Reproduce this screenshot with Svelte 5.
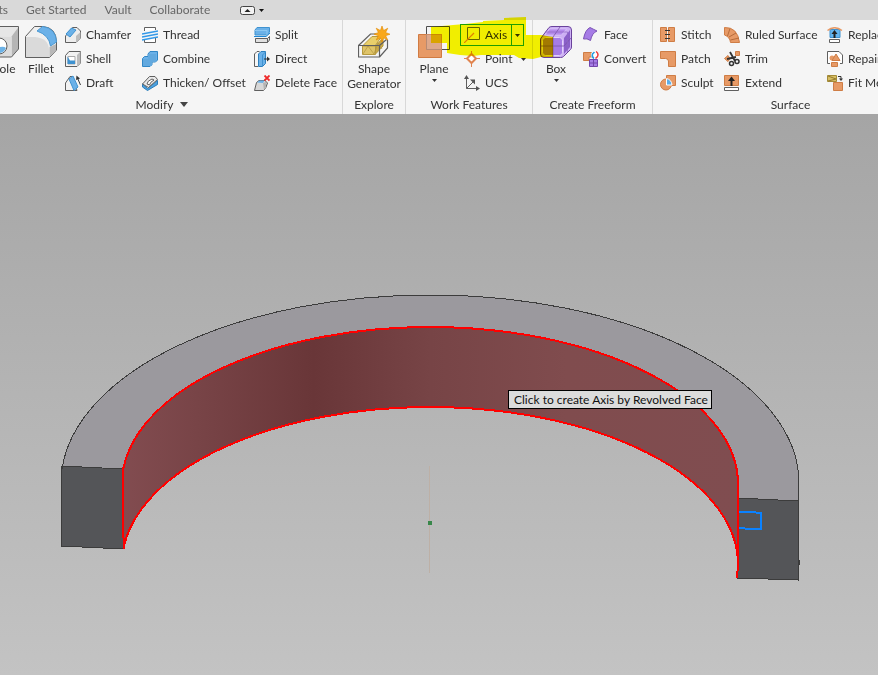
<script>
	const tabs = ['Environments', 'Get Started', 'Vault', 'Collaborate'];

	const panels = [
		{
			id: 'modify', title: 'Modify', more: true,
			big: [{ label: 'Hole', icon: 'hole' }, { label: 'Fillet', icon: 'fillet' }],
			cols: [
				[{ label: 'Chamfer', icon: 'chamfer' }, { label: 'Shell', icon: 'shell' }, { label: 'Draft', icon: 'draft' }],
				[{ label: 'Thread', icon: 'thread' }, { label: 'Combine', icon: 'combine' }, { label: 'Thicken/ Offset', icon: 'thicken' }],
				[{ label: 'Split', icon: 'split' }, { label: 'Direct', icon: 'direct' }, { label: 'Delete Face', icon: 'delete' }]
			]
		},
		{
			id: 'explore', title: 'Explore',
			big: [{ label: 'Shape Generator', icon: 'shape' }],
			cols: []
		},
		{
			id: 'work', title: 'Work Features',
			big: [{ label: 'Plane', icon: 'plane', menu: true }],
			cols: [
				[{ label: 'Axis', icon: 'axis', menu: true, active: true }, { label: 'Point', icon: 'point', menu: true }, { label: 'UCS', icon: 'ucs' }]
			]
		},
		{
			id: 'freeform', title: 'Create Freeform',
			big: [{ label: 'Box', icon: 'box', menu: true }],
			cols: [
				[{ label: 'Face', icon: 'face' }, { label: 'Convert', icon: 'convert' }]
			]
		},
		{
			id: 'surface', title: 'Surface',
			big: [],
			cols: [
				[{ label: 'Stitch', icon: 'stitch' }, { label: 'Patch', icon: 'patch' }, { label: 'Sculpt', icon: 'sculpt' }],
				[{ label: 'Ruled Surface', icon: 'ruled' }, { label: 'Trim', icon: 'trim' }, { label: 'Extend', icon: 'extend' }],
				[{ label: 'Replace Face', icon: 'replace' }, { label: 'Repair Bodies', icon: 'repair' }, { label: 'Fit Mesh Face', icon: 'fitmesh' }]
			]
		}
	];
</script>

{#snippet bigIcon(name)}
	<svg class="icon-lg" viewBox="0 0 32 32" fill="none" stroke="#5f5f5f" aria-hidden="true">
		{#if name === 'hole'}
			<path d="M1 10.5 9 1h22.500l-7 9.500z" fill="#e6e6e6" stroke="none" />
			<path d="M31.500 1v22l-7 8V10.500z" fill="#b5b5b5" stroke="none" />
			<path d="M1 10.500h23.500V31H1z" fill="#dcdcdc" stroke="none" />
			<path d="M1 31h23.500l7-8V.5H9l-8 10z" />
			<circle cx="12" cy="20" r="8" fill="#fff" />
			<path d="M5 22q4-4 8-1 4-1 6 1-2 5-7 5T5 22z" fill="#6cb2e6" stroke="none" />
		{:else if name === 'fillet'}
			<path d="M.5 10.500 9.500.500H18q13 1 13.500 15V24l-7 7.500H.5z" fill="#f0f0f0" />
			<path d="M1 11h9q13 1 14 12v8H1z" fill="#dadada" stroke="none" />
			<path d="M31 18v6l-6.500 7V21z" fill="#b8b8b8" stroke="none" />
			<path d="M12 5 17.500.500Q31 2 31.500 16l-6 4Q24 9 12 5z" fill="#6bb1e8" stroke="#4a98d2" />
		{:else if name === 'shape'}
			<path d="M4.500 20 14 10.500h9.500L17 20z" fill="#e9cf6b" stroke="#b79a3e" />
			<path d="M4.500 20h13v8.500h-13z" fill="#dfc469" stroke="#b79a3e" />
			<path d="M17.500 20 25 12v8l-7.500 8z" fill="#c9a947" stroke="#b79a3e" />
			<path d="m5 28 5-8 6 8 4-11 4 6" stroke="#b0933f" stroke-width=".7" />
			<path d="M.5 19.500h21v11.500H.5zM.5 19.500 12.500 8h6M21.500 19.500l7-6M21.500 31l8-9v-8" stroke-width="1.200" />
			<path d="M24 0l1.600 4.500 4.200-2.300-2.200 4.300L32 8.200l-4.400 1.500 2.200 4.300-4.300-2.200L24 16.200l-1.600-4.400-4.200 2.200 2.200-4.300L16 8.200l4.400-1.700-2.200-4.300 4.200 2.300z" fill="#f9a81a" stroke="#e28a00" stroke-width=".6" />
		{:else if name === 'plane'}
			<path d="M.5 8.500h23v23H.5z" fill="#e79a66" stroke="#d17b42" />
			<path d="M8.500 8.500h15v15h-15z" fill="#dda88b" stroke="#cf8d68" />
			<path d="M8.500 8V.500h23v23H24" stroke="#4e4e4e" />
			<path d="M8.500 8.500v15H24" stroke="#b88a72" />
		{:else if name === 'box'}
			<path d="M1 12 9 1.500Q10 .500 12 .500h16q3.500 0 3.500 3.500v17q0 1.500-1 2.500l-7 7q-1 1-3 1H4q-3.500 0-3.500-3.500V14q0-1 .5-2z" fill="#cdb0f4" stroke="#69429b" />
			<rect x="2.500" y="11.500" width="20" height="18" rx="3" fill="#a67ce6" stroke="#e2d2fb" />
			<path d="m24 12 6-8v17l-6 7z" fill="#8a5fc9" stroke="none" />
			<path d="M9.500 3h17l-5 6H5z" fill="#b58bec" stroke="#e2d2fb" stroke-width=".6" />
			<path d="M13 31V11l7-10M.5 20H24l7-8" stroke="#7a56a8" stroke-width=".8" />
			<path d="M5 6h22.500v20" stroke="#8d66c2" stroke-width=".7" />
		{/if}
	</svg>
{/snippet}

{#snippet icon(name)}
	<svg class="icon" viewBox="0 0 16 16" fill="none" stroke="#5f5f5f" aria-hidden="true">
		{#if name === 'chamfer'}
			<path d="M.5 15.500V9l7-8.500H12l3.500 3.500v7l-4.500 4.500z" fill="#ededed" />
			<path d="m11 9 4.500-4v6L11 15.500z" fill="#bdbdbd" stroke="none" />
			<path d="m1 7 5.500-6 4.500 2-6 7z" fill="#6bb1e8" stroke="#3f92d0" />
		{:else if name === 'shell'}
			<path d="M.5 4.500 4 .500h11.500V12L12 15.500H.5z" fill="#f2f2f2" />
			<path d="m12 4 3.500-3.500V12L12 15.500z" fill="#bcbcbc" stroke="none" />
			<path d="M3 5.500h7v7.500H3z" fill="#fff" stroke="#aaa" />
			<path d="M2.500 13V5.500l2.500 4h5V13z" fill="#3f92d0" stroke="none" />
		{:else if name === 'draft'}
			<path d="M.5 15.500V8L5 1.500h2.500L12 15.500z" fill="#f2f2f2" />
			<path d="m4 4 4-3 5 11-4 3.500z" fill="#6bb1e8" stroke="#3f92d0" />
			<path d="m15.500 10-3-7" stroke="#333" />
			<path d="m11.500.500 3.500 3-4 1.500z" fill="#333" stroke="none" />
		{:else if name === 'thread'}
			<path d="M2.500 4V.500h11V3M2.500 12v3.500h11V11" fill="#fff" />
			<path d="m0 7 16-3M0 10l16-3M0 13l16-3" stroke="#3298e8" stroke-width="1.300" />
		{:else if name === 'combine'}
			<path d="M.5 7.500 2.500 5.500H6V3l2-2.500h7.500V9l-2 2H10v2.500l-2 2H.5z" fill="#6bb1e8" stroke="#3287c6" />
			<path d="M6 5.500V3h8v8h-4v4H1V8h5z" fill="#62a9df" stroke="none" />
		{:else if name === 'thicken'}
			<path d="m.5 9 5 4.500 10-8v4l-10 6-5-3.500z" fill="#4fa2df" stroke="#2b7cb9" />
			<path d="M.5 9 7.500 1.500h5.500l2.500 3-9 8z" fill="#e9e9e9" />
			<path d="M5 9q0-3 5-5l2 1Q8 7 7.500 10z" fill="#fff" />
		{:else if name === 'split'}
			<path d="M1 3 3 .500h12.500V5L13 8H1z" fill="#6bb1e8" stroke="#3f92d0" />
			<path d="M1.500 11.500h12V15.500h-12zM13.500 11.500l2-2V13l-2 2.500" fill="#e0e0e0" />
			<path d="M0 9.500h12L16 6" stroke="#1d86d4" />
			<path d="M1 3.500h12V8" stroke="#8dc8f2" />
		{:else if name === 'direct'}
			<path d="M.5 15.500V3L3 .500h2.500M.5 15.500H4" />
			<path d="M4.500 3 7 .500h4.500v12l-3 3h-4z" fill="#6bb1e8" stroke="#2c7fbd" />
			<path d="M8.500 15V4l3-3" stroke="#3f92d0" />
			<path d="M10 8h5" stroke="#333" />
			<path d="m13 5.500 3 2.500-3 2.500z" fill="#333" stroke="none" />
		{:else if name === 'delete'}
			<path d="m.5 15.500 2-8L5 5.500h6L13.500 8l-2 5.500-2 2z" fill="#d7d7d7" />
			<path d="m3 7.500 2.500-2h5L9 8z" fill="#6bb1e8" stroke="none" />
			<path d="m9 8 3-1v6l-2 2z" fill="#b4b4b4" stroke="none" />
			<path d="m10.500.500 5 5m0-5-5 5" stroke="#ee2828" stroke-width="1.800" />
		{:else if name === 'axis'}
			<path d="M3.500.500h12v12h-12z" stroke="#666633" />
			<path d="m0 16 10-10" stroke="#e58349" stroke-width="1.200" />
		{:else if name === 'point'}
			<path d="M7.500 0v16M0 7.500h16" stroke="#e0844f" />
			<path d="m7.500 3 4.500 4.500L7.500 12 3 7.500z" fill="#fff" stroke="#e0844f" stroke-width="2" />
		{:else if name === 'ucs'}
			<path d="M2.500 2v11.500H14M2.500 13.500l7-7" />
			<path d="M2.500 0 0 4h5zM16 13.500 12 11v5zM11 4.500v5l-5-5z" fill="#555" stroke="none" />
		{:else if name === 'face'}
			<path d="M.5 12Q2 3 7 .500 10 2 14 4 9 6 7.500 13.500 4 11 .500 12z" fill="#a67ce6" stroke="#7a52b5" />
		{:else if name === 'convert'}
			<path d="M.5 1.500h9V6H6v3.500H.5z" fill="#e79a66" stroke="#cf7d45" />
			<path d="M6.500 8.500h8v7h-8zM10.500 8.500v7M6.500 12h8" fill="#a67ce6" stroke="#7346ab" />
			<circle cx="12" cy="4" r="4" fill="#fff" stroke="none" />
			<path d="M11 7.500Q8.500 6 9.500 3l2-2" stroke="#269ce0" stroke-width="1.500" />
			<path d="M13 .500q3 2 1.500 5l-2 2" stroke="#ee3b3b" stroke-width="1.500" />
		{:else if name === 'stitch'}
			<path d="M.5.500h6v14h-6zM8.500.500h6v14h-6z" fill="#e79a66" stroke="#cf7d45" />
			<path d="M5 3.500h5M5 7.500h5M5 11.500h5" stroke="#333" />
		{:else if name === 'patch'}
			<path d="M.5.500h15v15h-7V10Q8 7.500 5.500 7.500h-5z" fill="#e79a66" stroke="#cf7d45" />
		{:else if name === 'sculpt'}
			<path d="M6.500.500h9v10h-9z" fill="#e79a66" stroke="#cf7d45" />
			<circle cx="6" cy="9.500" r="5.500" fill="#e79a66" stroke="#cf7d45" />
			<path d="M6.500 3.500q5 1 5.500 6.500H6.500z" fill="#5daee8" stroke="#fff" />
		{:else if name === 'ruled'}
			<path d="M.5.500Q13.500 0 15.500 15.500h-9Q6 10 .500 8z" fill="#e79a66" stroke="#cf7d45" />
			<path d="M6 1.500 3.500 9M12 6l-7 4M15 11l-8.500 2" stroke="#a95f30" stroke-width=".8" />
		{:else if name === 'trim'}
			<path d="m.5 7.500 3.500-3 2 3-2 3zM11.500.500h4v4h-4z" fill="#e79a66" stroke="#cf7d45" />
			<path d="m6 1 5 9M3 8l9-2" stroke="#333" stroke-width="1.800" />
			<circle cx="7.500" cy="12.500" r="2" stroke="#333" stroke-width="1.500" />
			<circle cx="13" cy="10.500" r="2" stroke="#333" stroke-width="1.500" />
		{:else if name === 'extend'}
			<path d="M.5.500h14v10H.5z" fill="#e79a66" stroke="#cf7d45" />
			<path d="M.5 12.500h14v3H.5z" fill="#fff" />
			<path d="M7.500 5v6" stroke="#222" stroke-width="2" />
			<path d="M7.500 1.500 4 6h7z" fill="#222" stroke="none" />
		{:else if name === 'replace'}
			<path d="M3 2.500h10v8H3z" fill="#64b5f0" stroke="#3f92d0" />
			<path d="M.5 3.500q7-5.500 14.500 0" stroke="#e79a66" stroke-width="1.500" />
			<path d="M2.500 12.500h10v3h-10z" fill="#fff" />
			<path d="M7.500 6v5" stroke="#222" stroke-width="2" />
			<path d="M7.500 3 4.500 7h6z" fill="#222" stroke="none" />
		{:else if name === 'repair'}
			<path d="M3 12.500H.5V.500H12l3.500 3.500v8.500H13" fill="#fff" />
			<circle cx="5" cy="7" r="2.500" fill="#e79a66" stroke="none" />
			<path d="m9 3 4 6.500H5zM4.500 11.500h6v4h-6z" fill="#e79a66" stroke="#cf7d45" />
		{:else if name === 'fitmesh'}
			<path d="M.5.500h9v6h-9z" fill="#d7bd62" stroke="#a48b38" />
			<path d="m1 1 8 3-8 2" stroke="#927a2c" />
			<path d="M6.500 7.500h9v8h-9z" fill="#e79a66" stroke="#cf7d45" />
			<path d="M11 1.500h3V4" stroke="#333" />
			<path d="M12 3.500h4L14 6z" fill="#333" stroke="none" />
		{/if}
	</svg>
{/snippet}

{#snippet caret()}
	<svg class="caret" viewBox="0 0 5 3" aria-hidden="true"><path d="M0 0h5L2.500 3z" /></svg>
{/snippet}

<div class="app">
	<nav class="tabs">
		{#each tabs as tab}
			<a href="#{tab}">{tab}</a>
		{/each}
		<button class="minimize" aria-label="Minimize ribbon">
			<svg viewBox="0 0 26 9" aria-hidden="true">
				<rect x=".5" y=".5" width="14" height="8" rx="2" fill="#f3f3f3" stroke="#444" />
				<path d="M4.500 6 7.500 3l3 3z" fill="#222" />
				<path d="M19 3h5l-2.500 3z" fill="#111" />
			</svg>
		</button>
	</nav>

	<div class="ribbon">
		{#each panels as panel}
			<section class="panel {panel.id}">
				<div class="tools">
					{#each panel.big as tool}
						<button class="big">
							{@render bigIcon(tool.icon)}
							<span>{tool.label}</span>
							{#if tool.menu}{@render caret()}{/if}
						</button>
					{/each}
					{#each panel.cols as col}
						<div class="col">
							{#each col as tool}
								<div class="row" class:active={tool.active}>
									<button class="tool">
										{@render icon(tool.icon)}
										<span>{tool.label}</span>
									</button>
									{#if tool.menu}
										<button class="drop" aria-label="{tool.label} options">{@render caret()}</button>
									{/if}
								</div>
							{/each}
						</div>
					{/each}
				</div>
				<h2>
					{panel.title}
					{#if panel.more}
						<svg class="more" viewBox="0 0 8 5" aria-hidden="true"><path d="M0 0h8L4 5z" /></svg>
					{/if}
				</h2>
			</section>
		{/each}
		<!-- marker stroke over the Axis tool -->
		<svg class="marker" viewBox="0 0 122 42" aria-hidden="true">
			<path d="M0 10 22 8 34 7 52 5 52 4 73 3V1l22-1v18h15l12 2v20h-12l-8 2-14-1-5-3H50l-8 1-13-1-13-2V26H0z" fill="#fbf800" />
		</svg>
	</div>

	<main class="viewport">
		<svg class="scene" viewBox="0 114 878 561" aria-label="Half ring model">
			<defs>
				<linearGradient id="bore" gradientUnits="userSpaceOnUse" x1="123" y1="0" x2="738" y2="0">
					<stop offset="0" stop-color="#824c50" />
					<stop offset=".12" stop-color="#784447" />
					<stop offset=".31" stop-color="#693638" />
					<stop offset=".5" stop-color="#774446" />
					<stop offset=".72" stop-color="#804c4e" />
					<stop offset="1" stop-color="#804d50" />
				</linearGradient>
			</defs>
			<path d="M62 466V469A369 188 0 0 1 430 295A369 188 0 0 1 799 483L798 501 738 498V484A308 157 0 0 0 430 327A308 157 0 0 0 124 466V470z" fill="#9b999e" />
			<path d="M123 469 124 466A308 157 0 0 1 430 327A308 157 0 0 1 738 484V564A308 157 0 0 0 430 407A308 157 0 0 0 124 546V548z" fill="url(#bore)" />
			<path d="M61 466 123 469 124 549 61 546zM738 498l61 3v79l-62-2z" fill="#545558" />
			<path class="edge" d="M123 469 61 466V546L124 549M62 466V469A369 188 0 0 1 430 295A369 188 0 0 1 799 483L798 501V580L737 578M738 498l60 3M799 560v5" />
			<path d="M739 512h11l11 1v16h-11l-11-1" fill="none" stroke="#0a82ff" stroke-width="2" shape-rendering="crispEdges" />
			<path class="picked" d="M124 549 123 526V469L124 466A308 157 0 0 1 430 327A308 157 0 0 1 738 484V564L737 578M124 549V546A308 157 0 0 1 430 407A308 157 0 0 1 738 564" />
			<path d="M429.500 466v107" stroke="#bdb0a6" />
			<path d="M428 521h4v4h-4z" fill="#38874a" />
		</svg>
		<div class="tip" role="tooltip">Click to create Axis by Revolved Face</div>
	</main>
</div>

<style>
	:global(body) { margin: 0; }

	.app {
		height: 100vh;
		display: flex;
		flex-direction: column;
		overflow: hidden;
		font-family: Lato, 'Open Sans', sans-serif;
		font-size: 12px;
		line-height: 15px;
		color: #333;
	}

	button {
		font: inherit; color: inherit;
		background: none; border: 0; padding: 0; margin: 0;
	}
	svg { display: block; flex-shrink: 0; }

	.tabs {
		height: 20px; flex-shrink: 0;
		display: flex; align-items: center; gap: 18px;
		background: #d9d9d9;
	}
	.tabs a { color: #666; text-decoration: none; white-space: nowrap; padding-bottom: 2px; }
	.tabs a:first-child { width: 87px; margin-left: -79px; text-align: right; }
	.minimize { margin-left: 12px; }
	.minimize svg { width: 26px; height: 9px; }

	.ribbon {
		position: relative;
		display: flex; flex-shrink: 0;
		background: #f5f5f5;
	}

	.panel {
		flex-shrink: 0;
		box-sizing: border-box;
		border-right: 1px solid #d8d8d8;
	}
	.modify { width: 361px; margin-left: -18px; }
	.explore { width: 63px; }
	.work { width: 127px; }
	.freeform { width: 120px; }
	.surface { width: 276px; }

	.tools { display: flex; height: 72px; padding-top: 3px; }
	.modify .tools, .surface .tools { padding-left: 2px; }
	.work .tools { padding-left: 3px; }
	.freeform .tools { padding-left: 1px; }

	.panel h2 {
		margin: 0; height: 19px;
		display: flex; align-items: center; justify-content: center; gap: 7px;
		font-size: 12px; font-weight: 400;
	}
	.more { width: 8px; height: 5px; fill: #444; }

	.big {
		width: 38px; flex-shrink: 0;
		display: flex; flex-direction: column; align-items: center; gap: 3px;
		padding-top: 3px;
	}
	.explore .big { width: 62px; }
	.work .big { width: 50px; }
	.freeform .big { width: 44px; }

	.icon-lg { width: 32px; height: 32px; }
	.icon { width: 16px; height: 16px; }
	.caret { width: 5px; height: 3px; fill: #333; }

	.col { width: 77px; flex-shrink: 0; }
	.modify .col:nth-of-type(2) { width: 112px; }
	.surface .col { width: 64px; }
	.surface .col:nth-of-type(2) { width: 103px; }

	.row { display: flex; height: 24px; }
	.tool {
		display: flex; align-items: center; gap: 5px;
		padding-left: 5px;
		white-space: nowrap;
	}
	.tool span { padding-bottom: 2px; }
	.work .tool { width: 58px; }
	.drop { width: 12px; display: flex; align-items: center; justify-content: center; }

	.row.active {
		box-sizing: border-box;
		width: 64px; height: 22px;
		margin: 1px;
		border: 1px solid #1fa31f;
	}
	.active .tool { width: 50px; padding-left: 3px; }
	.active .drop { border-left: 1px solid #1fa31f; }

	.marker {
		position: absolute;
		left: 431px; top: -3px;
		width: 122px; height: 42px;
		mix-blend-mode: multiply;
		pointer-events: none;
	}

	.viewport {
		position: relative;
		flex: 1; min-height: 0;
		background: linear-gradient(#a5a5a5, #c3c3c3);
	}
	.scene { width: 100%; height: 100%; }
	.edge { fill: none; stroke: #3c3c3c; shape-rendering: crispEdges; }
	.picked { fill: none; stroke: #f00; stroke-width: 2; shape-rendering: crispEdges; }

	.tip {
		position: absolute;
		left: 508px; top: 276px;
		padding: 1px 3px 1px 5px;
		border: 1px solid #000;
		background: #dcdcdc;
		color: #111;
		white-space: nowrap;
	}
</style>
